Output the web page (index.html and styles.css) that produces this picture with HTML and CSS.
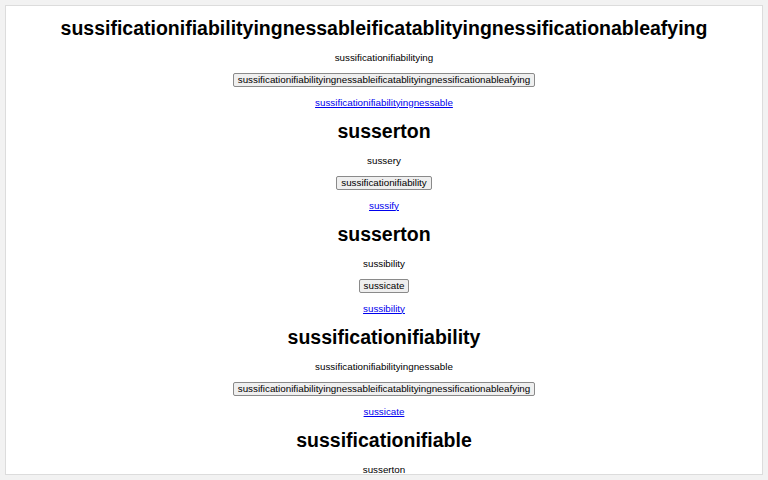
FILE: index.html
```html
<!DOCTYPE html>
<html>
<head>
<meta charset="utf-8">
<link rel="stylesheet" href="styles.css">
</head>
<body>
<div class="card">
  <section class="sec">
    <h2 class="title">sussificationifiabilityingnessableificatablityingnessificationableafying</h2>
    <p class="text">sussificationifiabilitying</p>
    <button class="btn">sussificationifiabilityingnessableificatablityingnessificationableafying</button>
    <a class="link" href="#">sussificationifiabilityingnessable</a>
  </section>
  <section class="sec">
    <h2 class="title">susserton</h2>
    <p class="text">sussery</p>
    <button class="btn">sussificationifiability</button>
    <a class="link" href="#">sussify</a>
  </section>
  <section class="sec">
    <h2 class="title">susserton</h2>
    <p class="text">sussibility</p>
    <button class="btn">sussicate</button>
    <a class="link" href="#">sussibility</a>
  </section>
  <section class="sec">
    <h2 class="title">sussificationifiability</h2>
    <p class="text">sussificationifiabilityingnessable</p>
    <button class="btn">sussificationifiabilityingnessableificatablityingnessificationableafying</button>
    <a class="link" href="#">sussicate</a>
  </section>
  <section class="sec">
    <h2 class="title">sussificationifiable</h2>
    <p class="text">susserton</p>
    <button class="btn">sussify</button>
    <a class="link" href="#">sussify</a>
  </section>
</div>
</body>
</html>
```
FILE: styles.css
```css
html, body {
  margin: 0;
  padding: 0;
  background: #f2f2f2;
}
body {
  padding: 5px;
  font-family: "Liberation Sans", Arial, sans-serif;
  color: #000;
}
.card {
  box-sizing: border-box;
  height: 470px;
  width: 758px;
  background: #fff;
  border: 1px solid #dcdcdc;
  padding: 10px 10px 0;
  overflow: hidden;
  display: flex;
  flex-direction: column;
  align-items: center;
}
.sec {
  display: flex;
  flex-direction: column;
  align-items: center;
  padding-bottom: 10.5px;
}
.title {
  margin: 0 0 10.5px;
  font-size: 19.5px;
  line-height: 24px;
  font-weight: bold;
}
.text {
  margin: 0 0 9px;
  font-size: 9.8px;
  line-height: 13px;
}
.btn {
  margin: 0 0 9px;
  font-family: "Liberation Sans", Arial, sans-serif;
  font-size: 9.8px;
  line-height: 12px;
  padding: 0 4px;
  height: 14px;
  background: #efefef;
  border: 1px solid #8a8a8a;
  border-radius: 2px;
  color: #000;
}
.link {
  font-size: 9.8px;
  line-height: 13px;
  color: #0000ee;
  text-decoration: underline;
}
```
